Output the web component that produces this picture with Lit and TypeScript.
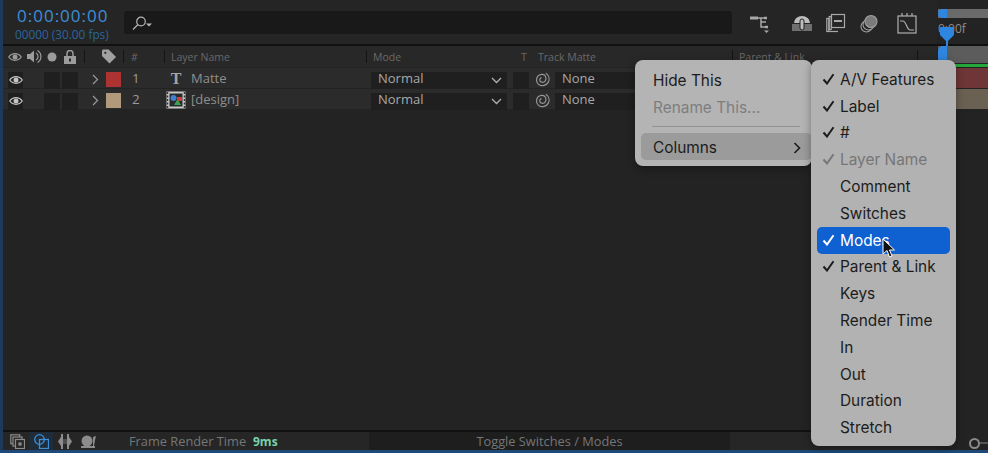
import { LitElement, html, css } from "lit";
import { customElement } from "lit/decorators.js";

const eye = html`<svg width="14" height="10" viewBox="0 0 14 10"><path d="M.8 5C3.8.6 10.200.6 13.200 5 10.200 9.400 3.800 9.400.8 5Z" fill="none" stroke="currentColor" stroke-width="1.300"/><circle cx="7" cy="5" r="2.500" fill="currentColor"/></svg>`;
const spiral = html`<svg width="17" height="17" viewBox="0 0 17 17" fill="none" stroke="#969696" stroke-width="1.300"><path d="M11.500 1.800C14.800 4 16 8 14 11.500 12 15 7.500 16 4.300 14 1.200 12 .8 7.800 3 5 5 2.700 8.500 2.300 10.500 4.300 12.300 6.200 12 9.300 10 10.800 8.300 12 6 11.500 5.200 9.700 4.700 8.300 5.500 6.800 7 6.600"/></svg>`;
const chevR = html`<svg width="7" height="11" viewBox="0 0 7 11" fill="none" stroke="#9a9a9a" stroke-width="1.200"><path d="M1 1l4.500 4.500L1 10"/></svg>`;
const chevD = html`<svg width="11" height="7" viewBox="0 0 11 7" fill="none" stroke="#b0b0b0" stroke-width="1.300"><path d="M1 1l4.500 4.500L10 1"/></svg>`;
const check = (c: string) => html`<svg width="13" height="12" viewBox="0 0 13 12" fill="none" stroke=${c} stroke-width="2"><path d="M1.500 6.500L5 10.500 11.500 1.200"/></svg>`;

const rows = [
  { n: "1", name: "Matte", color: "#ad3232", icon: "t" },
  { n: "2", name: "[design]", color: "#b09a7b", icon: "f" },
];
const items: [string, number][] = [
  ["A/V Features", 1], ["Label", 1], ["#", 1], ["Layer Name", 2], ["Comment", 0], ["Switches", 0],
  ["Modes", 3], ["Parent & Link", 1], ["Keys", 0], ["Render Time", 0], ["In", 0], ["Out", 0], ["Duration", 0], ["Stretch", 0],
];

@customElement("app-root")
export class AppRoot extends LitElement {
  static styles = css`
    :host { display: block; position: relative; width: 988px; height: 453px; overflow: hidden; background: #232323; font-family: "Open Sans", sans-serif; color: #a0a0a0; }
    .shell { display: grid; grid-template-columns: 937px 51px; height: 450px; border-bottom: 3px solid #1d4a78; }
    .main { display: flex; flex-direction: column; border-left: 3px solid #1d3a5c; min-width: 0; }
    .top { height: 44px; display: flex; align-items: flex-start; border-bottom: 2px solid #111; background: #252525; }
    .timecode { width: 121px; box-sizing: border-box; padding: 7px 0 0 12px; }
    .time { color: #3d8fd8; font-size: 17px; line-height: 18px; letter-spacing: 1px; padding-left: 2px; white-space: nowrap; }
    .frames { color: #2a669e; font-size: 11.800px; line-height: 16px; margin-top: 1px; white-space: nowrap; }
    .search { width: 608px; height: 23px; margin-top: 11px; background: #191919; border-radius: 3px; display: flex; align-items: center; padding-left: 8px; box-sizing: border-box; }
    .tools { display: flex; align-items: center; margin: 12px 0 0 17px; color: #a8a8a8; }
    .tools svg { display: block; }
    .cols { display: grid; height: 21px; align-items: center; padding-left: 5px; background: #282828; font-size: 10.500px; color: #686868; grid-template-columns: 19px 20px 17px 20px 1px 17px 21px 1px 40px 1px 201px 1px 154px 17px 194px 1px 184px 1px; }
    .cols i { display: block; width: 1px; height: 13px; background: #141414; }
    .cols span { white-space: nowrap; }
    .cols .ico { display: flex; align-items: center; color: #9c9c9c; }
    .cols .pad { padding-left: 6px; }
    .cols .pad7 { padding-left: 7px; }
    .row { height: 20px; margin-top: 1px; background: #2b2b2b; display: grid; align-items: center; padding-left: 5px; grid-template-columns: 15px 21px 16px 2px 16px 14px 8px 6px 15px 11px 34px 20px 5px 180px 136px 6px 16px 6px 16px 4px 1fr; }
    .cell { height: 17px; background: #1f1f1f; align-self: end; margin-bottom: 1px; }
    .eye { display: flex; align-items: center; justify-content: center; color: #c4c4c4; height: 17px; box-sizing: border-box; padding-bottom: 2px; background: #1f1f1f; align-self: end; margin-bottom: 1px; }
    .swatch { height: 15px; }
    .num { font-size: 13.500px; color: #999; padding-bottom: 2px; }
    .lname { font-size: 13px; color: #8e8e8e; white-space: nowrap; padding-bottom: 2px; }
    .tglyph { font-family: "Liberation Serif", serif; font-size: 16px; font-weight: 700; color: #a4a4a4; text-align: center; line-height: 18px; }
    .select { height: 17px; box-sizing: border-box; align-self: end; margin-bottom: 1px; background: #1f1f1f; display: flex; align-items: center; justify-content: space-between; padding: 0 5px 3px 7px; font-size: 13px; color: #a8a8a8; }
    .select span { line-height: 15px; margin-top: -1px; }
    .select svg { margin-top: 2px; }
    .none { height: 17px; align-self: end; margin-bottom: 1px; background: #1f1f1f; font-size: 13px; color: #a8a8a8; padding-left: 7px; line-height: 13px; }
    .spacer { flex: 1; }
    .foot { height: 18px; border-top: 2px solid #111; display: flex; align-items: center; background: #262626; font-size: 12.800px; color: #767676; }
    .foot .ic { width: 24px; height: 18px; display: flex; align-items: center; justify-content: center; color: #8c8c8c; }
    .foot .on { background: #1f2c3a; color: #3d8fd8; }
    .frt { margin-left: 28px; white-space: nowrap; width: 124px; }
    .ms { color: #78d2ac; font-weight: 700; font-size: 12px; width: 116px; }
    .toggle { width: 361px; height: 18px; background: #1e1e1e; text-align: center; line-height: 18px; }
    .side { display: flex; flex-direction: column; background: #232323; position: relative; }
    .ruler { height: 35px; border-bottom: 2px solid #111; padding-top: 9px; }
    .bar { display: flex; height: 9px; background: #6a6a6a; margin-left: 1px; }
    .bar b { width: 9px; background: #2f86e0; border-radius: 5px 0 0 5px; }
    .rt { font-size: 12px; color: #8d8d8d; line-height: 14px; margin-top: 4px; padding-left: 1px; white-space: nowrap; }
    .bar2 { display: flex; height: 17px; background: #5c5c5c; margin-left: 1px; }
    .bar2 b { width: 9px; background: #2f86e0; border-radius: 5px 0 0 5px; }
    .green { height: 3px; background: #24a83a; margin-top: 1px; }
    .t1 { height: 20px; background: #6e3636; margin-top: 1px; }
    .t2 { height: 20px; background: #6a6152; margin-top: 1px; }
    .knob { margin-top: auto; height: 18px; display: flex; align-items: center; padding: 4px 0 0 32px; box-sizing: border-box; }
    .knob i { display: block; width: 7px; height: 7px; border: 2px solid #8a8a8a; border-radius: 50%; }
    .knob u { display: block; flex: 1; height: 2px; background: #555; }
    .playhead { position: absolute; left: 2px; top: 27px; }

    .menu { position: absolute; border-radius: 8px; background: #b4b4b4; color: #1c1c1c; font-family: Inter, "Liberation Sans", sans-serif; font-size: 15.400px; box-shadow: 0 2px 8px rgba(0,0,0,.35); }
    .m1 { left: 635px; top: 60px; width: 177px; height: 106px; box-sizing: border-box; padding: 7px 0 0 6px; }
    .m1 .it { height: 26.500px; line-height: 28px; padding-left: 12px; }
    .m1 .dis { color: #7e7e7e; }
    .m1 hr { border: 0; height: 1px; background: #939393; margin: 6px 12px 6px 11px; }
    .m1 .sel { height: 27px; box-sizing: border-box; background: #9b9b9b; border-radius: 5px; display: flex; justify-content: space-between; align-items: center; padding: 2px 11px 0 12px; }
    .m2 { left: 811px; top: 60px; width: 145px; height: 386px; box-sizing: border-box; padding: 6px 6px 0; background: #b2b2b2; }
    .m2 .it { height: 26.800px; display: grid; grid-template-columns: 23px 1fr; align-items: center; border-radius: 5px; white-space: nowrap; }
    .m2 .it svg { margin-left: 5px; }
    .m2 .dis { color: #767676; }
    .m2 .hi { background: #0f60d0; color: #fff; }
    .cursor { position: absolute; left: 882px; top: 238px; }
  `;

  private tools() {
    return html`<div class="tools">
      <svg width="24" height="22" viewBox="0 0 24 22" fill="none" stroke="currentColor" stroke-width="1.500"><path d="M1 6h8" stroke-width="3"/><path d="M9 6h6M12 6v9h4M12 10h5"/><path d="M15 6h3M16 15h3" stroke-width="2.500"/><path d="M15 18.500h5l-2.500 2.500z" fill="currentColor" stroke="none"/></svg>
      <svg style="margin-left:18px" width="22" height="20" viewBox="0 0 22 20"><rect x="1" y="11" width="20" height="7" fill="#6f6f6f"/><path d="M3 10a8 7 0 0 1 16 0z" fill="#bdbdbd"/><rect x="9" y="6" width="4" height="11" rx="2" fill="#bdbdbd" stroke="#232323"/></svg>
      <svg style="margin-left:13px" width="20" height="20" viewBox="0 0 20 20" fill="none" stroke="#a8a8a8" stroke-width="1.200"><rect x="5.500" y="1.500" width="13" height="13"/><rect x="3.200" y="3.500" width="2" height="13"/><rect x=".8" y="5.500" width="2" height="13"/><path d="M8 8h8" stroke-width="2"/><path d="M3 18.500h9"/></svg>
      <svg style="margin-left:14px" width="18" height="19" viewBox="0 0 18 19" fill="none" stroke="#a0a0a0" stroke-width="1.100"><circle cx="6.500" cy="12.500" r="5.500"/><circle cx="8.500" cy="10.500" r="5.500" fill="#232323"/><circle cx="11" cy="7.500" r="6" fill="#7b7b7b"/></svg>
      <svg style="margin-left:19px" width="20" height="21" viewBox="0 0 20 21" fill="none" stroke="#b0b0b0" stroke-width="1.200"><rect x="1" y="3" width="18" height="17"/><path d="M5 0v3M10 0v3M15 0v3"/><path d="M3 8h3c3 0 4 9 7 9h4"/></svg>
    </div>`;
  }

  render() {
    return html`
      <div class="shell">
        <div class="main">
          <div class="top">
            <div class="timecode"><div class="time">0:00:00:00</div><div class="frames">00000 (30.00 fps)</div></div>
            <div class="search"><svg width="22" height="14" viewBox="0 0 22 14" fill="none" stroke="#b5b5b5" stroke-width="1.200"><circle cx="9" cy="5.500" r="4.300"/><path d="M6 8.500L1 13.500"/><path d="M14 7.500h6l-3 3z" fill="#b5b5b5" stroke="none"/></svg></div>
            ${this.tools()}
          </div>
          <div class="cols">
            <span class="ico">${eye}</span>
            <span class="ico"><svg width="15" height="15" viewBox="0 0 15 14"><path d="M0 4.500h3L7 1v12L3 9.500H0z" fill="#9c9c9c"/><path d="M9 3.500a4 4 0 0 1 0 7M10.500 1a7 7 0 0 1 0 12" fill="none" stroke="#9c9c9c" stroke-width="1.200"/></svg></span>
            <span class="ico"><svg width="10" height="10" viewBox="0 0 10 10"><circle cx="5" cy="5" r="4.500" fill="#9c9c9c"/></svg></span>
            <span class="ico"><svg width="12" height="14" viewBox="0 0 12 14"><path d="M3 6V3.500a3 3 0 0 1 6 0V6" fill="none" stroke="#9c9c9c" stroke-width="1.500"/><rect y="6" width="12" height="8" fill="#9c9c9c"/><rect x="5" y="8.500" width="2" height="3" fill="#282828"/></svg></span>
            <i></i><span></span>
            <span class="ico"><svg width="15" height="15" viewBox="0 0 16 15"><path d="M0 1v6l8 8 7-7-8-8H1z" fill="#a0a0a0"/><circle cx="3.500" cy="3.500" r="1.200" fill="#282828"/></svg></span>
            <i></i><span class="pad7">#</span><i></i><span class="pad">Layer Name</span><i></i><span class="pad">Mode</span><span>T</span><span>Track Matte</span><i></i><span class="pad">Parent &amp; Link</span><i></i>
          </div>
          ${rows.map((r) => html`
            <div class="row">
              <div class="eye">${eye}</div><span></span><div class="cell"></div><span></span><div class="cell"></div>
              <span></span><span>${chevR}</span><span></span>
              <div class="swatch" style="background:${r.color}"></div><span></span>
              <span class="num">${r.n}</span>
              ${r.icon === "t"
                ? html`<div class="tglyph">T</div>`
                : html`<svg width="20" height="18" viewBox="0 0 20 18"><rect x=".5" y=".5" width="19" height="17" fill="#c8c8c8"/><path d="M1.500 1v16M18.500 1v16" stroke="#333" stroke-width="1.500" stroke-dasharray="2 1.500"/><rect x="3.500" y="2.500" width="13" height="13" fill="#2a2a2a"/><circle cx="7.500" cy="7" r="3" fill="#3f7fd0"/><path d="M8 14l3.500-6 3.500 6z" fill="#3ba356"/><rect x="11" y="6" width="5" height="4" fill="#c84040"/></svg>`}
              <span></span>
              <span class="lname">${r.name}</span>
              <div class="select"><span>Normal</span>${chevD}</div><span></span>
              <div class="cell"></div><span></span>
              <span style="display:flex">${spiral}</span><span></span>
              <div class="none">None</div>
            </div>`)}
          <div class="spacer"></div>
          <div class="foot">
            <div style="width:2px"></div>
            <div class="ic"><svg width="15" height="15" viewBox="0 0 15 15" fill="none" stroke="currentColor" stroke-width="1.200"><rect x=".8" y=".8" width="9" height="9"/><rect x="3" y="3" width="9" height="9" fill="#262626"/><rect x="5.500" y="5.500" width="9" height="9" fill="#262626"/><rect x="9" y="9" width="2" height="2" fill="currentColor"/></svg></div>
            <div class="ic on"><svg width="15" height="15" viewBox="0 0 15 15" fill="none" stroke="currentColor" stroke-width="1.300"><circle cx="5.500" cy="5.500" r="4.800"/><rect x="5.500" y="5.500" width="9" height="9"/></svg></div>
            <div class="ic"><svg width="14" height="15" viewBox="0 0 14 15" fill="currentColor"><path d="M3 0h2v15H3zM9 0h2v15H9zM3 3L0 7.500 3 12zM11 3l3 4.500-3 4.500z"/><rect x="5" y="5" width="4" height="5" opacity=".4"/></svg></div>
            <div class="ic"><svg width="16" height="13" viewBox="0 0 16 13" fill="currentColor"><circle cx="6" cy="6" r="5.500"/><rect x="0" y="11" width="14" height="2"/><path d="M12 2l3-1-1 4-1 6h-1z"/></svg></div>
            <div class="frt">Frame Render Time</div><div class="ms">9ms</div>
            <div class="toggle">Toggle Switches / Modes</div>
          </div>
        </div>
        <div class="side">
          <div class="ruler"><div class="bar"><b></b></div><div class="rt">0:00f</div></div>
          <svg class="playhead" width="16" height="19" viewBox="0 0 16 19"><path d="M1 0h14v8L8 15 1 8z" fill="#2f86e0"/><rect x="7" y="14" width="2" height="5" fill="#2f86e0"/></svg>
          <div class="bar2"><b></b></div>
          <div class="green"></div>
          <div class="t1"></div>
          <div class="t2"></div>
          <div class="knob"><i></i><u></u></div>
        </div>
      </div>
      <div class="menu m1">
        <div class="it">Hide This</div>
        <div class="it dis">Rename This...</div>
        <hr />
        <div class="sel"><span>Columns</span><svg width="8" height="12" viewBox="0 0 8 12" fill="none" stroke="#1c1c1c" stroke-width="1.600"><path d="M1.500 1l5 5-5 5"/></svg></div>
      </div>
      <div class="menu m2">
        ${items.map(([t, s]) => html`<div class="it ${s === 2 ? "dis" : ""} ${s === 3 ? "hi" : ""}"><span>${s ? check(s === 2 ? "#767676" : s === 3 ? "#fff" : "#1c1c1c") : ""}</span><span>${t}</span></div>`)}
      </div>
      <svg class="cursor" width="14" height="21" viewBox="0 0 14 21"><path d="M1 1v15l4-3.500 2.500 6.500 2.500-1-2.500-6h5z" fill="#111" stroke="#fff" stroke-width="1"/></svg>
    `;
  }
}
